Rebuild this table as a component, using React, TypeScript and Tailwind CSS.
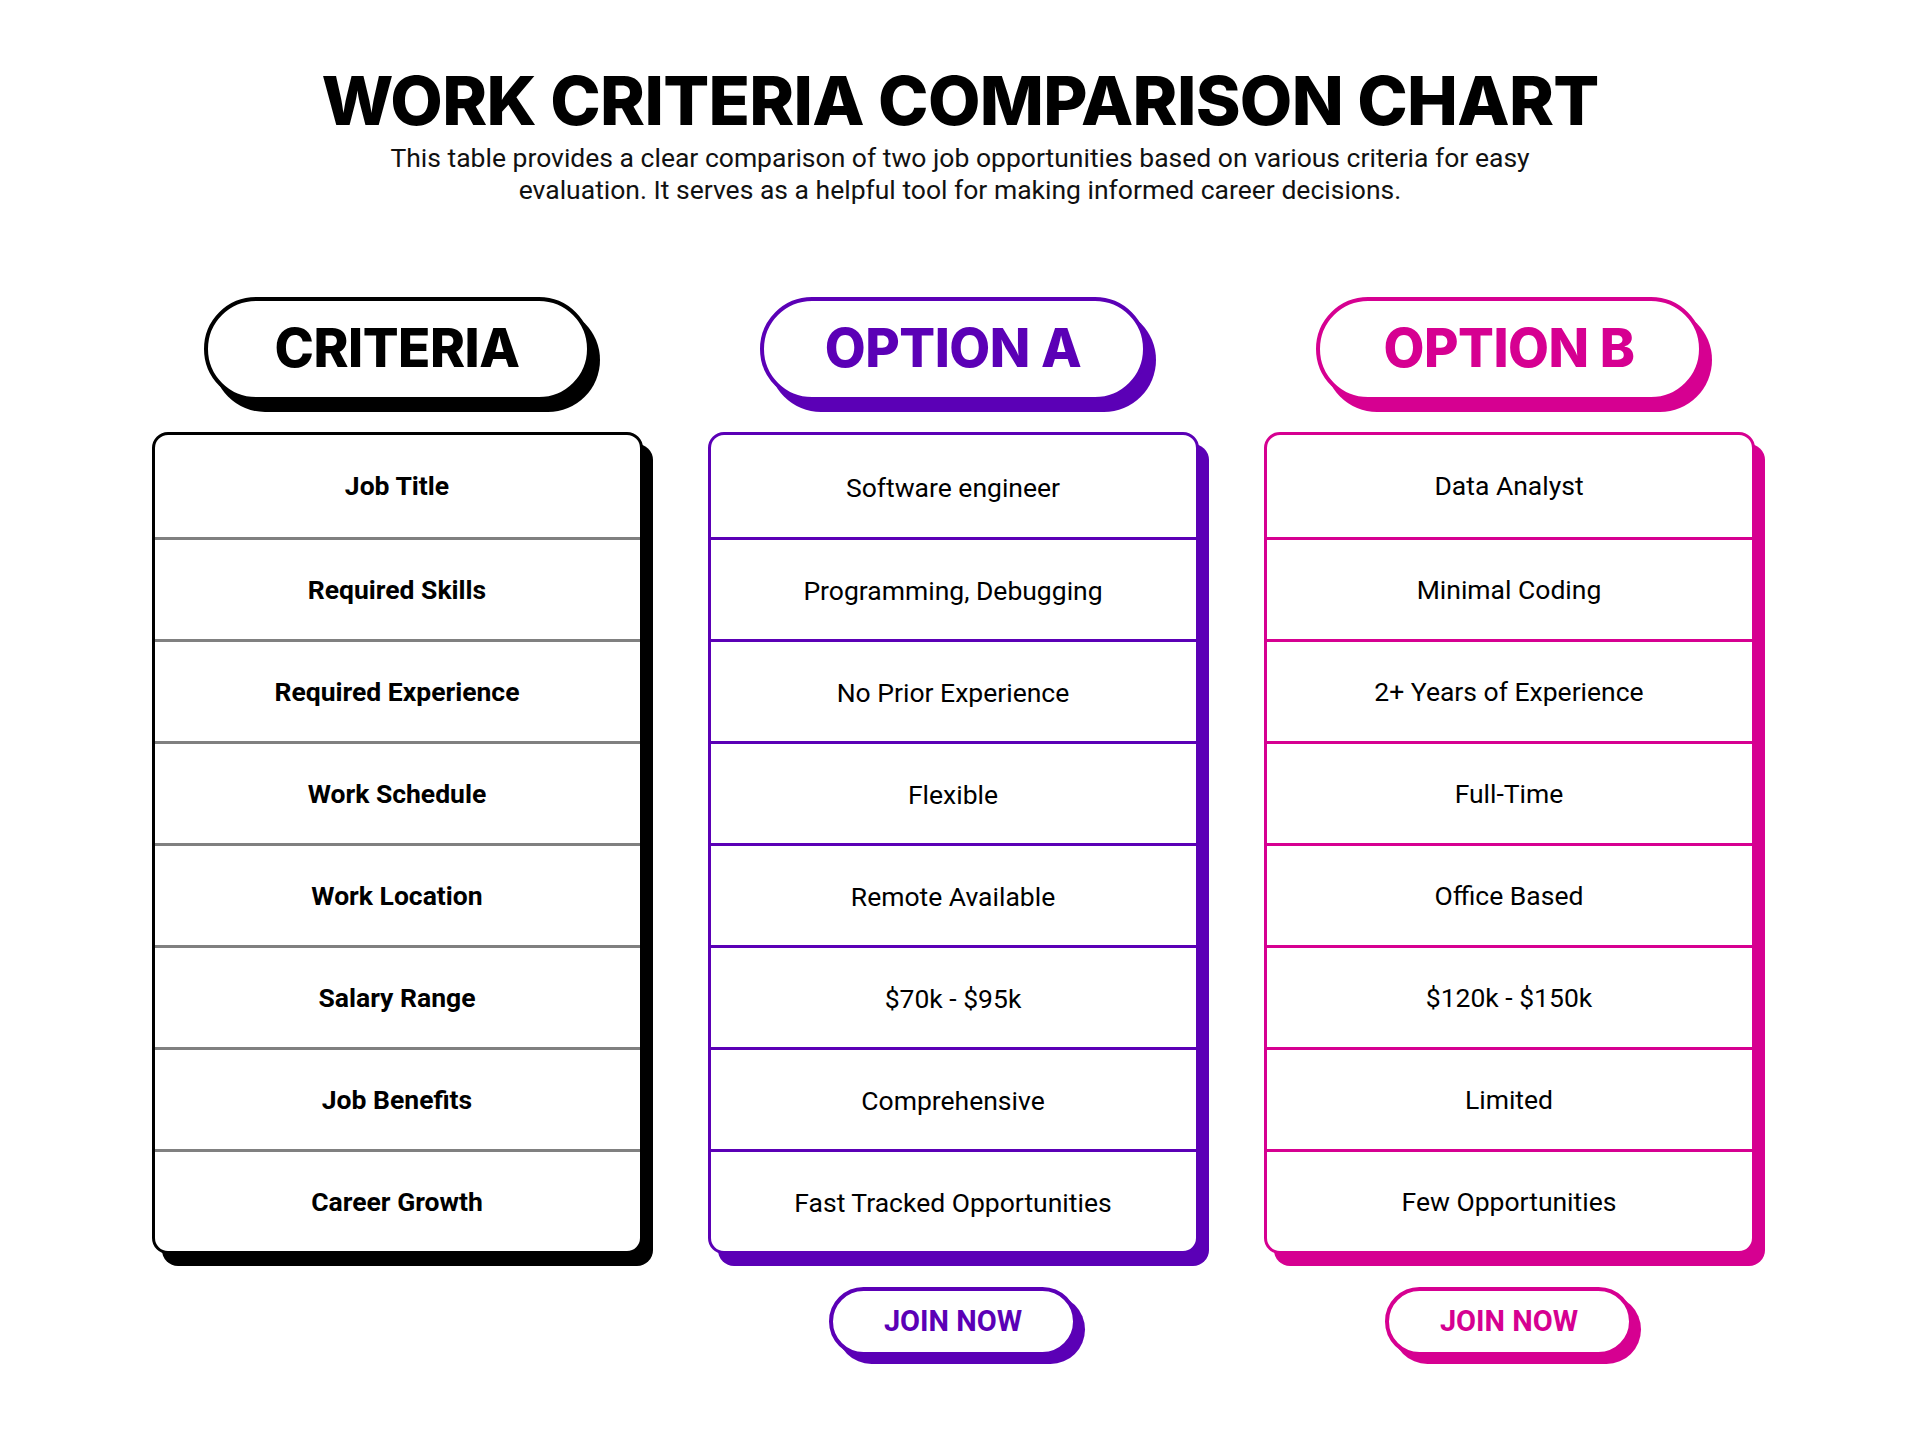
const criteria = [
  'Job Title',
  'Required Skills',
  'Required Experience',
  'Work Schedule',
  'Work Location',
  'Salary Range',
  'Job Benefits',
  'Career Growth',
];

const optionA = [
  'Software engineer',
  'Programming, Debugging',
  'No Prior Experience',
  'Flexible',
  'Remote Available',
  '$70k - $95k',
  'Comprehensive',
  'Fast Tracked Opportunities',
];

const optionB = [
  'Data Analyst',
  'Minimal Coding',
  '2+ Years of Experience',
  'Full-Time',
  'Office Based',
  '$120k - $150k',
  'Limited',
  'Few Opportunities',
];

const columns = [
  {
    title: 'CRITERIA',
    rows: criteria,
    bold: true,
    pill: 'border-black text-black shadow-[9px_11px_0_0_#000]',
    box: 'border-black shadow-[10px_12px_0_0_#000]',
    line: 'border-[#808080]',
    button: null as string | null,
    rowPad: '',
  },
  {
    title: 'OPTION A',
    rows: optionA,
    bold: false,
    pill: 'border-[#5b00b6] text-[#5b00b6] shadow-[9px_11px_0_0_#5b00b6]',
    box: 'border-[#5b00b6] shadow-[10px_12px_0_0_#5b00b6]',
    line: 'border-[#5b00b6]',
    button: 'border-[#5b00b6] text-[#5b00b6] shadow-[8px_8px_0_0_#5b00b6]',
    rowPad: 'pt-[3px]',
  },
  {
    title: 'OPTION B',
    rows: optionB,
    bold: false,
    pill: 'border-[#d60091] text-[#d60091] shadow-[9px_11px_0_0_#d60091]',
    box: 'border-[#d60091] shadow-[10px_12px_0_0_#d60091]',
    line: 'border-[#d60091]',
    button: 'border-[#d60091] text-[#d60091] shadow-[8px_8px_0_0_#d60091]',
    rowPad: '',
  },
];

export default function App() {
  return (
    <div className="min-h-[1440px] w-full bg-white flex flex-col items-center font-['Roboto',sans-serif] text-black">
      <h1 className="mt-[66px] text-[68px] leading-none font-extrabold tracking-[-0.7px] font-['Inter',sans-serif]">
        WORK CRITERIA COMPARISON CHART
      </h1>
      <p className="mt-[8px] max-w-[1160px] text-center text-[26.5px] leading-[32px] text-[#111]">
        This table provides a clear comparison of two job opportunities based on various criteria for easy
        evaluation. It serves as a helpful tool for making informed career decisions.
      </p>

      <div className="mt-[91px] flex gap-[65px] pr-[14px]">
        {columns.map((col) => (
          <div key={col.title} className="w-[491px] flex flex-col items-center">
            <div
              className={`w-[387px] h-[104px] rounded-full border-4 bg-white flex items-center justify-center text-[53px] font-extrabold tracking-[-0.5px] font-['Inter',sans-serif] ${col.pill}`}
            >
              {col.title}
            </div>

            <div className={`mt-[31px] w-full rounded-2xl border-[3px] bg-white ${col.box}`}>
              {col.rows.map((r, i) => (
                <div
                  key={r}
                  className={`h-[102px] flex items-center justify-center text-[26.5px] ${col.rowPad} ${
                    col.bold ? 'font-bold' : 'font-normal'
                  } ${i > 0 ? `border-t-[3px] ${col.line}` : ''}`}
                >
                  {r}
                </div>
              ))}
            </div>

            {col.button && (
              <button
                className={`mt-[33px] w-[248px] h-[69px] rounded-full border-4 bg-white text-[29px] font-bold ${col.button}`}
              >
                JOIN NOW
              </button>
            )}
          </div>
        ))}
      </div>
    </div>
  );
}
